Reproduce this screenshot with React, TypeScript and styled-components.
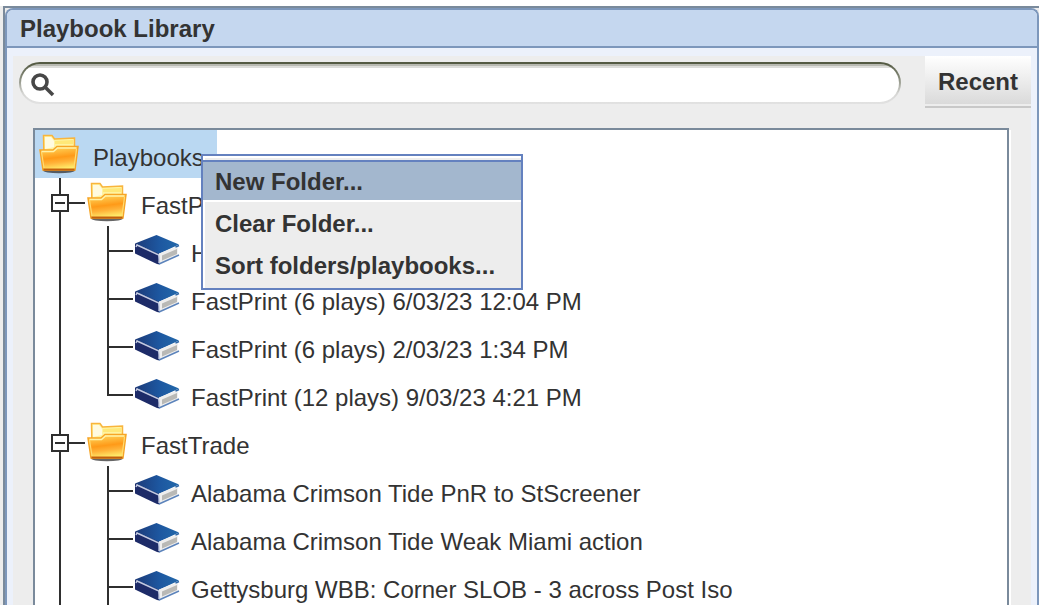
import React from "react";
import styled, { createGlobalStyle } from "styled-components";

const ink = "#333333";
const line = "#2f2f2f";
const steel = "#7a8a9b";
const frame = "#7d97bb";
const face = "#ededed";

const GlobalStyle = createGlobalStyle`
  * { box-sizing: border-box; }
  body {
    margin: 0;
    background: #ffffff;
    color: ${ink};
    font-family: "Liberation Sans", Arial, sans-serif;
    font-size: 24px;
  }
  ul { list-style: none; margin: 0; padding: 0; }
`;

const Page = styled.main`
  height: 100vh;
  padding: 6px 9px 0 0;
  overflow: hidden;
  display: flex;
`;

const Gutter = styled.div`
  width: 3px;
  flex: none;
  background: ${face};
`;

const Backdrop = styled.div`
  flex: 1;
  min-width: 0;
  display: flex;
  border-top: 2px solid ${steel};
  border-left: 2px solid ${steel};
  background: ${face};
`;

const Window = styled.section`
  flex: 1;
  min-width: 0;
  display: flex;
  flex-direction: column;
  border: 2px solid ${frame};
  border-bottom: 0;
  border-radius: 8px 8px 0 0;
  background: #ecf1fb;
  overflow: hidden;
`;

const TitleBar = styled.h1`
  margin: 0;
  padding: 0 13px;
  flex: none;
  height: 38px;
  line-height: 38px;
  font-size: 24px;
  font-weight: bold;
  background: #c5d7ef;
  border-bottom: 2px solid ${frame};
`;

const Content = styled.div`
  flex: 1;
  min-height: 0;
  margin: 8px 6px 0;
  display: flex;
  flex-direction: column;
  background: ${face};
`;

const Toolbar = styled.div`
  flex: none;
  display: flex;
  align-items: flex-start;
  gap: 24px;
  padding-left: 6px;
  height: 72px;
`;

const SearchField = styled.label`
  flex: 1;
  height: 42px;
  margin-top: 6px;
  padding: 4px 20px 0 10px;
  display: flex;
  align-items: center;
  gap: 8px;
  border: 2px solid transparent;
  border-radius: 21px;
  background:
    linear-gradient(#b9bab2 0 2px, #dededb 2px 4px, #ffffff 4px) padding-box,
    linear-gradient(#555b44 0 5%, #8b8f80 40%, #d6d6d4 75%, #e2e2e2) border-box;
`;

const SearchInput = styled.input`
  flex: 1;
  min-width: 0;
  border: 0;
  padding: 0;
  outline: 0;
  background: transparent;
  color: ${ink};
  font: inherit;
`;

const RecentButton = styled.button`
  flex: none;
  width: 106px;
  height: 52px;
  padding: 2px 0 0;
  border: 0;
  border-bottom: 2px solid #c8c8c8;
  background: linear-gradient(#ffffff, #dadada) 0 0 / 100% 48px no-repeat ${face};
  color: ${ink};
  font: bold 24px "Liberation Sans", Arial, sans-serif;
`;

const TreeBox = styled.div`
  position: relative;
  flex: 1;
  min-height: 0;
  margin: 0 22px 0 20px;
  border: 2px solid ${steel};
  border-bottom: 0;
  box-shadow: 2px 2px 0 #ffffff;
  background: #ffffff;
  overflow: hidden;
`;

const Row = styled.div<{ $selected?: boolean; $gap: number }>`
  display: flex;
  align-items: center;
  gap: ${(p) => p.$gap}px;
  width: max-content;
  height: 48px;
  white-space: nowrap;
  padding: 0 13px 0 4px;
  background: ${(p) => (p.$selected ? "#bad8f2" : "transparent")};
`;

const Label = styled.span`
  line-height: 30px;
  padding-top: 8px;
`;

const Branch = styled.ul`
  padding-left: 24px;
`;

/* Each node draws its own piece of the vertical guide on its left edge. */
const Node = styled.li<{ $last?: boolean }>`
  position: relative;
  padding-left: 24px;
  &::before {
    content: "";
    position: absolute;
    left: 0;
    top: 0;
    width: 2px;
    height: ${(p) => (p.$last ? "26px" : "100%")};
    background: ${line};
  }
  &::after {
    content: "";
    position: absolute;
    left: 0;
    top: 24px;
    width: 26px;
    height: 2px;
    background: ${line};
  }
`;

const Toggle = styled.button`
  position: absolute;
  z-index: 1;
  left: -8px;
  top: 16px;
  width: 18px;
  height: 18px;
  padding: 0;
  border: 2px solid ${line};
  background: linear-gradient(${line}, ${line}) center / 10px 2px no-repeat #ffffff;
`;

const Menu = styled.ul`
  position: absolute;
  z-index: 2;
  left: 166px;
  top: 24px;
  width: 322px;
  && { padding: 4px 0 2px; }
  border: 2px solid #6481bf;
  background: linear-gradient(#ffffff 0 2px, transparent 2px),
    linear-gradient(90deg, #ffffff 0 2px, ${face} 2px);
`;

const MenuItem = styled.button<{ $active?: boolean }>`
  display: block;
  width: 100%;
  height: 42px;
  padding: 2px 12px 0;
  border: 0;
  border-top: 2px solid ${(p) => (p.$active ? "#6481bf" : "transparent")};
  border-bottom: 2px solid ${(p) => (p.$active ? "#ffffff" : "transparent")};
  background: ${(p) => (p.$active ? "#a3b7ce" : "transparent")};
  color: ${ink};
  font: bold 24px "Liberation Sans", Arial, sans-serif;
  text-align: left;
  white-space: nowrap;
`;

const Icon = styled.svg`
  display: block;
  flex: none;
`;

const SearchIcon = () => (
  <Icon width="24" height="24" viewBox="0 0 24 24" aria-hidden="true">
    <circle cx="9" cy="9" r="7" fill="none" stroke="#474747" strokeWidth="3.6" />
    <path d="M14 14 L22 22" stroke="#474747" strokeWidth="3.6" />
  </Icon>
);

const FolderIcon = () => (
  <Icon width="40" height="40" viewBox="0 0 40 40" aria-hidden="true">
    <ellipse cx="20" cy="36.5" rx="16" ry="2.8" fill="#333" opacity="0.75" />
    <path d="M4.5 1.5 L13 1.5 L15.5 5 L35.5 4 L35.5 14 L30 24 L5 24 Z" fill="#fff3a0" stroke="#f9b53c" strokeWidth="1.5" />
    <path d="M6 3 L12 3 L15 7 L15 13 L6 15 Z" fill="#fffbe0" />
    <path d="M16 7 L34 6 L34 10 L16 10 Z" fill="#ffe878" />
    <path d="M1 16 L14 16 L18 12.5 L39 12.5 L36 36 L4 36 Z" fill="url(#folderFront)" stroke="#f7a526" strokeWidth="1.5" />
    <path d="M2.5 17.5 L14.5 17.5 L18.5 14 L37.5 14" fill="none" stroke="#fff2a8" strokeWidth="1.5" />
    <path d="M2.5 18 L5 34 M37.5 15 L35 34" fill="none" stroke="#ffdc72" strokeWidth="1.2" />
    <path d="M4.5 35.5 L35.5 35.5" stroke="#c4600c" strokeWidth="2" />
  </Icon>
);

const BookIcon = () => (
  <Icon width="45" height="30" viewBox="0 0 45 30" aria-hidden="true">
    <path d="M0 8.5 L21.5 0 L44 9.5 L23.5 19 Z" fill="url(#bookTop)" />
    <path d="M0 8.5 L23.5 18.5 L24.5 29.5 L22 29 L0 18.5 Z" fill="#1d2b68" />
    <path d="M24 18.5 L43 11 L42.5 20 L25 28.5 Z" fill="#eeeeee" />
    <path d="M27 20.5 L42 14 L42 19 L27 25.5 Z" fill="#b9b9b6" />
    <path d="M24 29 L44 20" stroke="#5b83bb" strokeWidth="1.4" />
    <path d="M40.5 12 L44 10.5" stroke="#2d67a8" strokeWidth="1.5" />
    <path d="M1 12 L2 10 L22.5 19.5 Q24.5 18.5 24 28" fill="none" stroke="#c3cbe2" strokeWidth="1.4" />
  </Icon>
);

const PaintDefs = styled.svg`
  position: absolute;
`;

const IconPaints = () => (
  <PaintDefs width="0" height="0" aria-hidden="true">
    <defs>
      <linearGradient id="folderFront" x1="0.2" y1="0" x2="0.4" y2="1">
        <stop offset="0" stopColor="#ffdc62" />
        <stop offset="0.5" stopColor="#ff9a18" />
        <stop offset="0.7" stopColor="#ffb238" />
        <stop offset="1" stopColor="#fff06e" />
      </linearGradient>
      <linearGradient id="bookTop" x1="0" y1="0" x2="1" y2="0">
        <stop offset="0" stopColor="#1c3a78" />
        <stop offset="0.55" stopColor="#1d57a0" />
        <stop offset="1" stopColor="#2268aa" />
      </linearGradient>
    </defs>
  </PaintDefs>
);

type Folder = { name: string; books: string[]; more?: boolean };

const folders: Folder[] = [
  {
    name: "FastPrint",
    books: [
      "H",
      "FastPrint (6 plays) 6/03/23 12:04 PM",
      "FastPrint (6 plays) 2/03/23 1:34 PM",
      "FastPrint (12 plays) 9/03/23 4:21 PM",
    ],
  },
  {
    name: "FastTrade",
    more: true,
    books: [
      "Alabama Crimson Tide PnR to StScreener",
      "Alabama Crimson Tide Weak Miami action",
      "Gettysburg WBB: Corner SLOB - 3 across Post Iso",
    ],
  },
];

const actions = ["New Folder...", "Clear Folder...", "Sort folders/playbooks..."];

export default function App() {
  return (
    <Page>
      <GlobalStyle />
      <Gutter />
      <Backdrop>
        <Window>
          <TitleBar>Playbook Library</TitleBar>
          <Content>
            <Toolbar>
              <SearchField>
                <SearchIcon />
                <SearchInput type="text" aria-label="Search playbooks" />
              </SearchField>
              <RecentButton type="button">Recent</RecentButton>
            </Toolbar>
            <TreeBox>
              <IconPaints />
              <Row $selected $gap={14}>
                <FolderIcon />
                <Label>Playbooks</Label>
              </Row>
              <Branch>
                {folders.map((folder) => (
                  <Node key={folder.name}>
                    <Toggle type="button" aria-label={`Collapse ${folder.name}`} />
                    <Row $gap={14}>
                      <FolderIcon />
                      <Label>{folder.name}</Label>
                    </Row>
                    <Branch>
                      {folder.books.map((book, i) => (
                        <Node key={book} $last={!folder.more && i === folder.books.length - 1}>
                          <Row $gap={11}>
                            <BookIcon />
                            <Label>{book}</Label>
                          </Row>
                        </Node>
                      ))}
                    </Branch>
                  </Node>
                ))}
              </Branch>
              <Menu>
                {actions.map((action, i) => (
                  <li key={action}>
                    <MenuItem type="button" $active={i === 0}>
                      {action}
                    </MenuItem>
                  </li>
                ))}
              </Menu>
            </TreeBox>
          </Content>
        </Window>
      </Backdrop>
    </Page>
  );
}
